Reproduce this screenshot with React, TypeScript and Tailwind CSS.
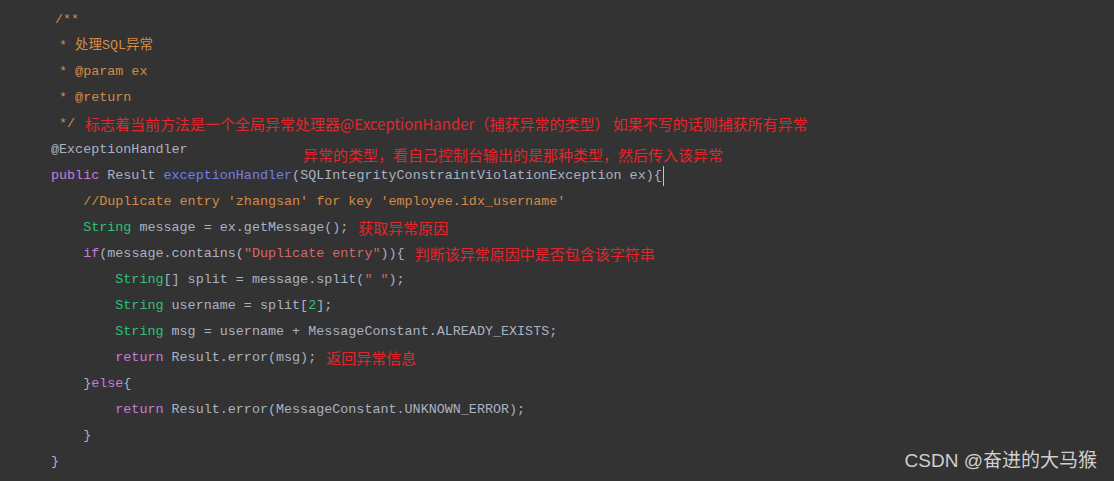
import React from "react";

const C = {
  text: "text-[#a9b2c3]",
  kw: "text-[#c77dd7]",
  fn: "text-[#747ee8]",
  type: "text-[#2fc07a]",
  cmt: "text-[#d38b47]",
  str: "text-[#d06a6a]",
};

const mono = { fontFamily: '"Liberation Mono", "DejaVu Sans Mono", "Noto Sans CJK SC", monospace' };
const cjk = { fontFamily: '"Noto Sans CJK SC", "Liberation Sans", sans-serif' };

function Note({ children }: { children: React.ReactNode }) {
  return (
    <span className="ml-[10px] text-[15px] text-[#e3262c]" style={cjk}>
      {children}
    </span>
  );
}

function Line({ children, indent = 0 }: { children?: React.ReactNode; indent?: number }) {
  return (
    <div className="flex h-[26px] items-center whitespace-pre">
      <span>{" ".repeat(indent)}</span>
      {children}
    </div>
  );
}

export default function App() {
  return (
    <div className="relative h-[481px] w-[1114px] overflow-hidden bg-[#333333]">
      <div className={`pl-[51px] pt-[7px] text-[13.4px] ${C.text}`} style={mono}>
        <Line>
          <span className={`ml-[4px] ${C.cmt}`}>/**</span>
        </Line>
        <Line>
          <span className={C.cmt}> * 处理SQL异常</span>
        </Line>
        <Line>
          <span className={C.cmt}> * @param ex</span>
        </Line>
        <Line>
          <span className={C.cmt}> * @return</span>
        </Line>
        <Line>
          <span className={C.cmt}> */</span>
          <Note>标志着当前方法是一个全局异常处理器@ExceptionHander（捕获异常的类型） 如果不写的话则捕获所有异常</Note>
        </Line>
        <Line>
          <span>@ExceptionHandler</span>
        </Line>
        <Line>
          <span className={C.kw}>public</span>
          <span> Result </span>
          <span className={C.fn}>exceptionHandler</span>
          <span>(SQLIntegrityConstraintViolationException ex){"{"}</span>
          <span className="ml-px inline-block h-[20px] w-px bg-[#c0c4cc]" />
        </Line>
        <Line indent={4}>
          <span className={C.cmt}>//Duplicate entry 'zhangsan' for key 'employee.idx_username'</span>
        </Line>
        <Line indent={4}>
          <span className={C.type}>String</span>
          <span> message = ex.getMessage();</span>
          <Note>获取异常原因</Note>
        </Line>
        <Line indent={4}>
          <span className={C.kw}>if</span>
          <span>(message.contains(</span>
          <span className={C.str}>"Duplicate entry"</span>
          <span>)){"{"}</span>
          <Note>判断该异常原因中是否包含该字符串</Note>
        </Line>
        <Line indent={8}>
          <span className={C.type}>String</span>
          <span>[] split = message.split(</span>
          <span className={C.str}>" "</span>
          <span>);</span>
        </Line>
        <Line indent={8}>
          <span className={C.type}>String</span>
          <span> username = split[</span>
          <span className={C.type}>2</span>
          <span>];</span>
        </Line>
        <Line indent={8}>
          <span className={C.type}>String</span>
          <span> msg = username + MessageConstant.ALREADY_EXISTS;</span>
        </Line>
        <Line indent={8}>
          <span className={C.kw}>return</span>
          <span> Result.error(msg);</span>
          <Note>返回异常信息</Note>
        </Line>
        <Line indent={4}>
          <span>{"}"}</span>
          <span className={C.kw}>else</span>
          <span>{"{"}</span>
        </Line>
        <Line indent={8}>
          <span className={C.kw}>return</span>
          <span> Result.error(MessageConstant.UNKNOWN_ERROR);</span>
        </Line>
        <Line indent={4}>
          <span>{"}"}</span>
        </Line>
        <Line>
          <span>{"}"}</span>
        </Line>
      </div>

      <div
        className="absolute left-[303px] top-[145px] text-[15px] leading-[20px] text-[#e3262c]"
        style={cjk}
      >
        异常的类型，看自己控制台输出的是那种类型，然后传入该异常
      </div>

      <div
        className="absolute right-[17px] top-[449px] text-[19px] leading-[24px] text-[#cfcfcf]"
        style={{ fontFamily: '"Liberation Sans", "Noto Sans CJK SC", sans-serif' }}
      >
        CSDN @奋进的大马猴
      </div>
    </div>
  );
}
